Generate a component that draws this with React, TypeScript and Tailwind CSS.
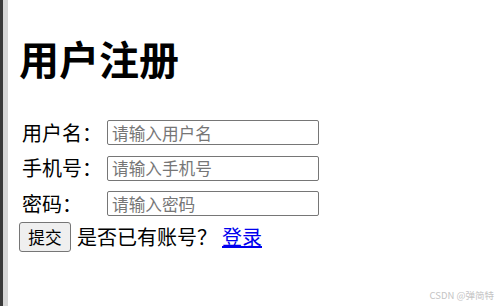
export default function App() {
  const fields = [
    { label: "用户名：", placeholder: "请输入用户名", type: "text" },
    { label: "手机号：", placeholder: "请输入手机号", type: "text" },
    { label: "密码：", placeholder: "请输入密码", type: "password" },
  ];

  return (
    <div className="relative flex h-[306px] w-[498px] overflow-hidden bg-white font-['Noto_Sans_CJK_SC','Noto_Sans',sans-serif] text-black">
      {/* window edge */}
      <div className="w-[3px] shrink-0 bg-[#3a3a3a]" />
      <div className="w-[5px] shrink-0 bg-[#d6d6d6]" />

      <div className="flex flex-col pl-[11px]">
        <h1 className="mt-[38px] text-[40px] font-bold leading-[40px]">用户注册</h1>

        <form className="mt-[37px] flex flex-col" onSubmit={(e) => e.preventDefault()}>
          {fields.map((f) => (
            <div key={f.label} className="flex h-[35.5px] items-center">
              <label className="w-[88px] pl-[3px] text-[20px] leading-[24px]">{f.label}</label>
              <input
                type={f.type}
                placeholder={f.placeholder}
                className="h-[25px] w-[212px] rounded-[2px] border border-[#767676] px-[4px] text-[16.67px] outline-none placeholder:text-[#767676]"
              />
            </div>
          ))}

          <div className="flex items-center text-[20px] leading-[24px]">
            <button
              type="submit"
              className="h-[30px] w-[52px] rounded-[3px] border border-[#767676] bg-[#efefef] text-[16.67px] leading-[20px]"
            >
              提交
            </button>
            <span className="ml-[6px]">是否已有账号？</span>
            <a href="#" className="ml-[5px] text-[#0000ee] underline">
              登录
            </a>
          </div>
        </form>
      </div>

      <div className="absolute bottom-[5px] right-[4px] text-[9.5px] leading-[12px] text-[#c4c4c4]">
        CSDN @弹简特
      </div>
    </div>
  );
}
